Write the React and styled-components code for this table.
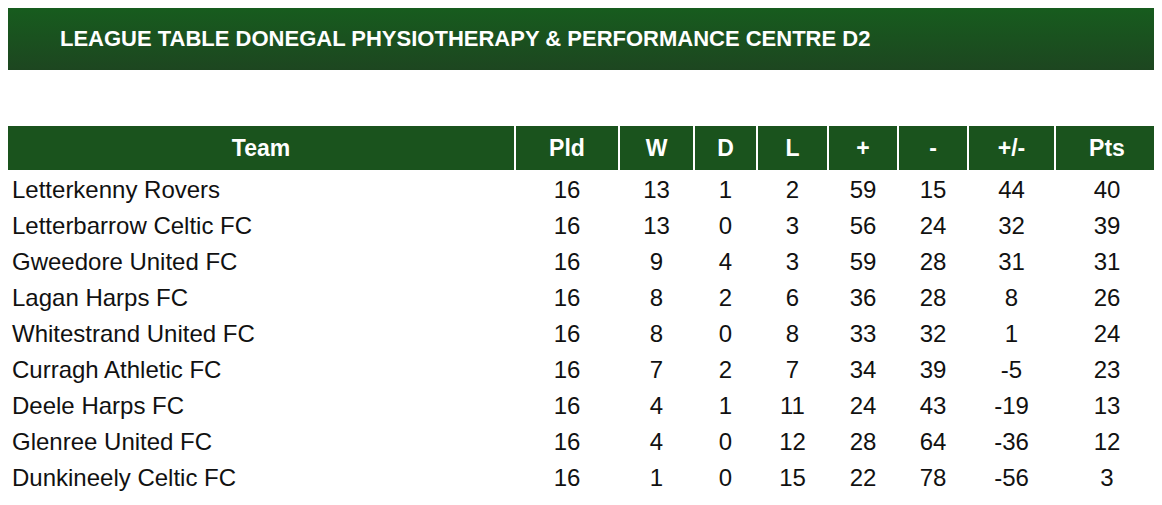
import React from 'react';
import styled, { createGlobalStyle } from 'styled-components';

const GlobalStyle = createGlobalStyle`
  body {
    margin: 8px;
    background: #ffffff;
    font-family: "Liberation Sans", Arial, sans-serif;
  }
`;

const Banner = styled.div`
  width: 1152px;
  height: 62px;
  display: flex;
  align-items: center;
  padding-left: 52px;
  box-sizing: border-box;
  background: linear-gradient(to bottom, #175c1e 0%, #1d4620 100%);
`;

const Title = styled.h1`
  margin: 0;
  color: #ffffff;
  font-size: 22px;
  font-weight: bold;
  text-transform: uppercase;
`;

const Table = styled.div`
  margin-top: 56px;
  display: grid;
  grid-template-columns: 506px 102px 73px 61px 69px 68px 68px 85px 102px;
  column-gap: 2px;
  row-gap: 2px;
`;

const HeadCell = styled.div`
  height: 44px;
  box-sizing: border-box;
  padding-top: 1px;
  display: flex;
  align-items: center;
  justify-content: center;
  background: #1a531d;
  color: #ffffff;
  font-size: 23px;
  font-weight: bold;
`;

const Cell = styled.div`
  height: 34px;
  box-sizing: border-box;
  padding-top: 2px;
  display: flex;
  align-items: center;
  justify-content: ${(p) => (p.$left ? 'flex-start' : 'center')};
  padding-left: ${(p) => (p.$left ? '4px' : '0')};
  color: #111111;
  font-size: 24px;
`;

const columns = ['Team', 'Pld', 'W', 'D', 'L', '+', '-', '+/-', 'Pts'];

const rows = [
  ['Letterkenny Rovers', 16, 13, 1, 2, 59, 15, 44, 40],
  ['Letterbarrow Celtic FC', 16, 13, 0, 3, 56, 24, 32, 39],
  ['Gweedore United FC', 16, 9, 4, 3, 59, 28, 31, 31],
  ['Lagan Harps FC', 16, 8, 2, 6, 36, 28, 8, 26],
  ['Whitestrand United FC', 16, 8, 0, 8, 33, 32, 1, 24],
  ['Curragh Athletic FC', 16, 7, 2, 7, 34, 39, -5, 23],
  ['Deele Harps FC', 16, 4, 1, 11, 24, 43, -19, 13],
  ['Glenree United FC', 16, 4, 0, 12, 28, 64, -36, 12],
  ['Dunkineely Celtic FC', 16, 1, 0, 15, 22, 78, -56, 3],
];

export default function App() {
  return (
    <>
      <GlobalStyle />
      <Banner>
        <Title>League Table Donegal Physiotherapy &amp; Performance Centre D2</Title>
      </Banner>
      <Table>
        {columns.map((c) => (
          <HeadCell key={c}>{c}</HeadCell>
        ))}
        {rows.map((r) =>
          r.map((v, i) => (
            <Cell key={r[0] + i} $left={i === 0}>
              {v}
            </Cell>
          ))
        )}
      </Table>
    </>
  );
}
